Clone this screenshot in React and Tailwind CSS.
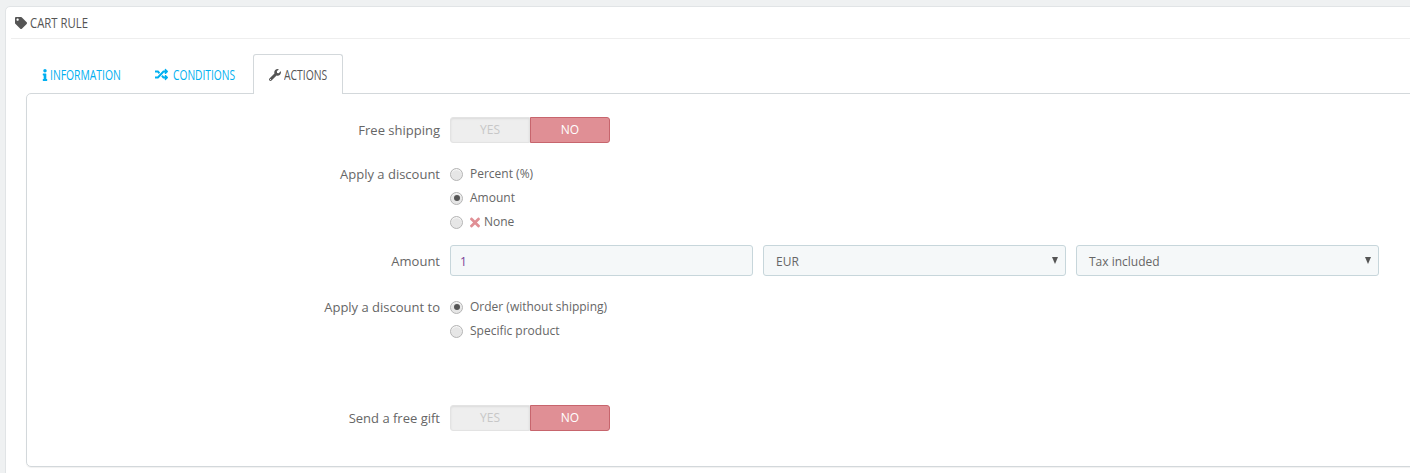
import React from "react";
import { FaTag, FaInfo, FaRandom, FaWrench, FaTimes } from "react-icons/fa";

// Headings in the original use a condensed face, squeezed Open Sans stands in for it
const Condensed = ({ className, children }) => (
  <span className={`inline-block whitespace-nowrap origin-left text-[14px] leading-none ${className}`}>
    {children}
  </span>
);

// Yes/No switch, always on "No" in this view
const Switch = () => (
  <div className="flex w-40 h-[26px] rounded-[3px] text-xs">
    <div className="w-20 flex items-center justify-center bg-[#eeeeee] text-[#c7c7c7] rounded-l-[3px] border border-[#e3e3e3] shadow-[inset_0_1px_2px_rgba(0,0,0,0.08)]">
      YES
    </div>
    <div className="w-20 flex items-center justify-center bg-[#e08f95] text-white rounded-r-[3px] border border-[#c7656d]">
      NO
    </div>
  </div>
);

const Radio = ({ checked, children }) => (
  <div className="flex items-center h-6 text-xs text-[#666666]">
    <span className="w-[13px] h-[13px] mr-[7px] rounded-full border border-[#b5b5b5] bg-[#e6e6e6] shadow-[inset_0_1px_1px_rgba(255,255,255,0.8)] flex items-center justify-center">
      {checked && <span className="w-1.5 h-1.5 rounded-full bg-[#555555]" />}
    </span>
    <span className="flex items-center">{children}</span>
  </div>
);

const Row = ({ label, className, labelClass, children }) => (
  <div className={`flex ${className}`}>
    <div className={`w-[413px] shrink-0 text-right text-[13px] text-[#666666] ${labelClass}`}>
      {label}
    </div>
    <div className="ml-[10px]">{children}</div>
  </div>
);

const Field = ({ children, arrow, className }) => (
  <div className={`relative w-[303px] h-[31px] flex items-center pt-[2px] bg-[#f5f8f9] border border-[#c7d6db] rounded-[3px] text-xs text-[#666666] ${className}`}>
    {children}
    {arrow && (
      <span className="absolute right-[7px] top-[11px] w-0 h-0 border-x-[3px] border-x-transparent border-t-[7px] border-t-[#555555]" />
    )}
  </div>
);

const App = () => {
  return (
    <div className="w-[1410px] h-[473px] overflow-hidden bg-[#eff1f2] pt-[6px] pl-[5px] font-['Open_Sans',sans-serif]">
      <div className="w-[1440px] h-[480px] bg-white border border-[#e1e4e6] rounded-[5px] pl-[5px]">
        {/* Panel heading */}
        <div className="h-[32px] border-b border-[#eeeeee] flex items-center pl-[4px] text-[#555555]">
          <FaTag size={12} className="shrink-0" />
          <Condensed className="ml-[3px] w-[58px] scale-x-[0.81]">CART RULE</Condensed>
        </div>

        {/* Tabs */}
        <div className="flex items-end h-[54px] pl-[16px]">
          <div className="flex items-center h-[39px] pt-[2px] pl-[15px] pr-[15px] text-[#00aff0]">
            <FaInfo className="w-[6px] h-[12px]" />
            <Condensed className="ml-[2px] w-[71px] scale-x-[0.74]">INFORMATION</Condensed>
          </div>
          <div className="flex items-center h-[39px] pt-[2px] pl-[19px] pr-[18px] text-[#00aff0]">
            <FaRandom size={13} />
            <Condensed className="ml-[5px] w-[62px] scale-x-[0.73]">CONDITIONS</Condensed>
          </div>
          <div className="flex items-center h-10 pt-px -mb-px z-10 px-[15px] bg-white border border-b-0 border-[#d3d8db] rounded-t-[3px] text-[#555555]">
            <FaWrench size={12} />
            <Condensed className="ml-[3px] w-[43px] scale-x-[0.74]">ACTIONS</Condensed>
          </div>
        </div>

        {/* Tab content */}
        <div className="ml-[15px] h-[374px] border border-[#d3d8db] rounded-[5px] shadow-[0_1px_1px_rgba(0,0,0,0.06)] pt-[23px]">
          <Row label="Free shipping" labelClass="leading-[26px]">
            <Switch />
          </Row>
          <Row label="Apply a discount" className="mt-[19px]" labelClass="leading-6">
            <Radio>Percent (%)</Radio>
            <Radio checked>Amount</Radio>
            <Radio>
              <FaTimes className="w-[10px] h-[15px] mr-[4px] text-[#e08f95]" />
              None
            </Radio>
          </Row>
          <Row label="Amount" className="mt-[11px]" labelClass="h-[31px] leading-[33px]">
            <div className="flex gap-[10px]">
              <Field className="px-[9px]"><span className="text-[#7b3f98]">1</span></Field>
              <Field arrow className="px-3">EUR</Field>
              <Field arrow className="px-3">Tax included</Field>
            </div>
          </Row>
          <Row label="Apply a discount to" className="mt-[19px]" labelClass="leading-6">
            <Radio checked>Order (without shipping)</Radio>
            <Radio>Specific product</Radio>
          </Row>
          <Row label="Send a free gift" className="mt-[62px]" labelClass="leading-[26px]">
            <Switch />
          </Row>
        </div>
      </div>
    </div>
  );
};

export default App;
